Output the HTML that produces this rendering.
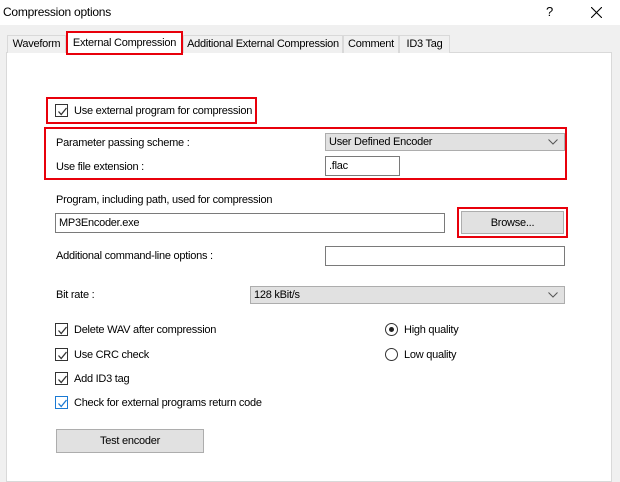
<!DOCTYPE html>
<html><head><style>
*{box-sizing:border-box;margin:0;padding:0}
body{width:620px;height:470px;background:#f0f0f0;font-family:"Liberation Sans",sans-serif;font-size:11px;letter-spacing:-0.25px;color:#000;position:relative;overflow:hidden}
.a{position:absolute;white-space:nowrap}
.t{margin-top:1px}
.title{left:0;top:0;width:620px;height:25px;background:#fff}
.tab{position:absolute;top:35px;height:18px;border:1px solid #d9d9d9;border-bottom:none;background:#f0f0f0;text-align:center;line-height:17px;white-space:nowrap;overflow:hidden}
.panel{position:absolute;left:6px;top:52px;width:606px;height:430px;background:#fff;border:1px solid #d9d9d9}
.red{position:absolute;border:2px solid #e8000b}
.cb{position:absolute;width:13px;height:13px;border:1px solid #333;background:#fff}
.cb svg{position:absolute;left:1px;top:1px}
.inp{position:absolute;height:20px;border:1px solid #7a7a7a;background:#fff;padding-left:3px;line-height:19px;white-space:nowrap}
.sel{position:absolute;height:18px;border:1px solid #adadad;background:#e1e1e1;padding-left:3px;line-height:17px;white-space:nowrap}
.sel svg{position:absolute;right:6px;top:5px}
.btn{position:absolute;border:1px solid #adadad;background:#e1e1e1;text-align:center}
.rad{position:absolute;width:13px;height:13px;border:1px solid #333;border-radius:50%;background:#fff}
</style></head><body>
<div class="a title"></div>
<div class="a" style="left:3px;top:5px;font-size:12px">Compression options</div>
<div class="a" style="left:546px;top:4px;font-size:13px">?</div>
<svg class="a" style="left:591px;top:7px" width="11" height="11"><path d="M0 0L11 11M11 0L0 11" stroke="#000" stroke-width="1.1"/></svg>

<div class="panel"></div>
<div class="tab" style="left:7px;width:59px">Waveform</div>
<div class="tab" style="left:66px;top:32px;height:21px;width:117px;background:#fff;line-height:20px">External Compression</div>
<div class="tab" style="left:183px;width:160px">Additional External Compression</div>
<div class="tab" style="left:343px;width:56px">Comment</div>
<div class="tab" style="left:399px;width:51px">ID3 Tag</div>
<div class="red" style="left:66px;top:31px;width:117px;height:24px"></div>

<div class="red" style="left:46px;top:97px;width:211px;height:27px"></div>
<div class="cb" style="left:55px;top:104px"><svg width="11" height="11"><path d="M1.5 5.5L4.2 8.5L9.5 2" stroke="#333" stroke-width="1.3" fill="none"/></svg></div>
<div class="a" style="left:74px;top:105px">Use external program for compression</div>

<div class="red" style="left:44px;top:127px;width:523px;height:53px"></div>
<div class="a" style="left:56px;top:137px">Parameter passing scheme :</div>
<div class="sel" style="left:325px;top:133px;width:240px">User Defined Encoder<svg width="10" height="6"><path d="M0.5 0.5L5 5L9.5 0.5" stroke="#555" fill="none"/></svg></div>
<div class="a" style="left:56px;top:161px">Use file extension :</div>
<div class="inp" style="left:325px;top:156px;width:75px">.flac</div>

<div class="a" style="left:56px;top:194px">Program, including path, used for compression</div>
<div class="inp" style="left:55px;top:213px;width:390px">MP3Encoder.exe</div>
<div class="red" style="left:457px;top:207px;width:111px;height:31px"></div>
<div class="btn" style="left:461px;top:211px;width:103px;height:23px;line-height:22px">Browse...</div>

<div class="a" style="left:56px;top:250px">Additional command-line options :</div>
<div class="inp" style="left:325px;top:246px;width:240px"></div>

<div class="a" style="left:56px;top:289px">Bit rate :</div>
<div class="sel" style="left:250px;top:286px;width:315px">128 kBit/s<svg width="10" height="6"><path d="M0.5 0.5L5 5L9.5 0.5" stroke="#555" fill="none"/></svg></div>

<div class="cb" style="left:55px;top:323px"><svg width="11" height="11"><path d="M1.5 5.5L4.2 8.5L9.5 2" stroke="#333" stroke-width="1.3" fill="none"/></svg></div>
<div class="a" style="left:74px;top:324px">Delete WAV after compression</div>
<div class="cb" style="left:55px;top:348px"><svg width="11" height="11"><path d="M1.5 5.5L4.2 8.5L9.5 2" stroke="#333" stroke-width="1.3" fill="none"/></svg></div>
<div class="a" style="left:74px;top:349px">Use CRC check</div>
<div class="cb" style="left:55px;top:372px"><svg width="11" height="11"><path d="M1.5 5.5L4.2 8.5L9.5 2" stroke="#333" stroke-width="1.3" fill="none"/></svg></div>
<div class="a" style="left:74px;top:373px">Add ID3 tag</div>
<div class="cb" style="left:55px;top:396px;border-color:#1a7ad4"><svg width="11" height="11"><path d="M1.5 5.5L4.2 8.5L9.5 2" stroke="#1a7ad4" stroke-width="1.3" fill="none"/></svg></div>
<div class="a" style="left:74px;top:397px">Check for external programs return code</div>

<div class="rad" style="left:385px;top:323px"><div style="position:absolute;left:3px;top:3px;width:5px;height:5px;border-radius:50%;background:#222"></div></div>
<div class="a" style="left:404px;top:324px">High quality</div>
<div class="rad" style="left:385px;top:348px"></div>
<div class="a" style="left:404px;top:349px">Low quality</div>

<div class="btn" style="left:56px;top:429px;width:148px;height:24px;line-height:23px">Test encoder</div>
</body></html>
